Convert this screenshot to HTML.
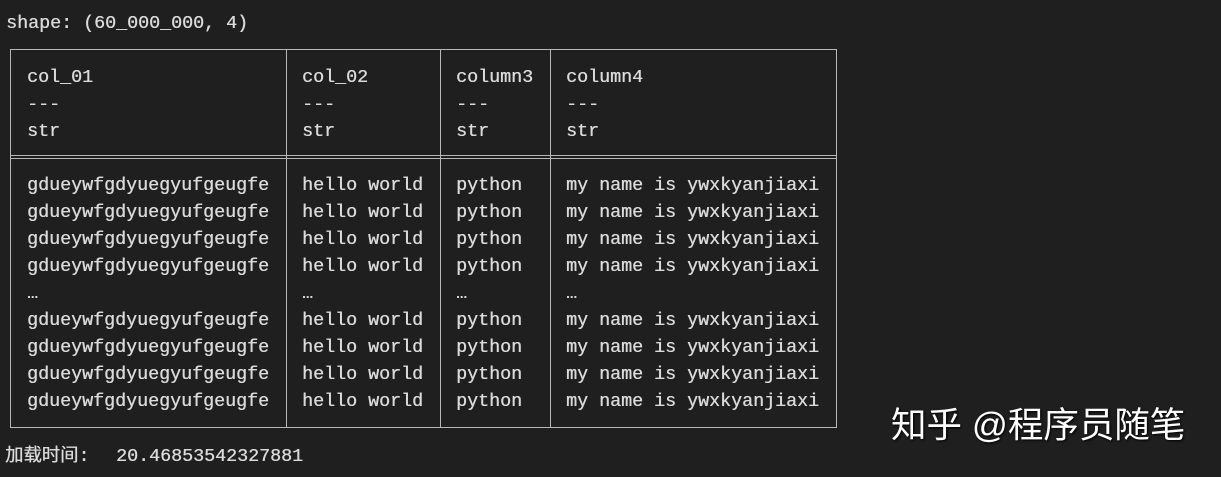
<!DOCTYPE html>
<html><head><meta charset="utf-8"><style>
html,body{margin:0;padding:0;}
body{width:1221px;height:477px;background:#1f1f1f;position:relative;overflow:hidden;font-family:"Liberation Mono","Noto Sans CJK SC",monospace;font-size:18.33px;color:#dadada;}
.t{position:absolute;white-space:pre;line-height:27px;text-shadow:0.4px 0 0 #dadada;}
.h{position:absolute;height:1px;background:#b8b8b8;}
.v{position:absolute;width:1px;background:#b8b8b8;}
.wm{position:absolute;left:891px;top:402px;font-family:"Liberation Sans","Noto Sans CJK SC",sans-serif;font-size:35.5px;color:#fff;white-space:pre;line-height:46px;text-shadow:1px 1px 2px #000;}
</style></head><body>
<div class="t" style="left:6px;top:10px">shape: (60_000_000, 4)</div>
<div class="h" style="left:10px;top:49px;width:827px"></div>
<div class="h" style="left:10px;top:155px;width:827px"></div>
<div class="h" style="left:10px;top:158px;width:827px"></div>
<div class="h" style="left:10px;top:427px;width:827px"></div>
<div class="v" style="left:10px;top:49px;height:379px"></div>
<div class="v" style="left:286px;top:49px;height:379px"></div>
<div class="v" style="left:440px;top:49px;height:379px"></div>
<div class="v" style="left:550px;top:49px;height:379px"></div>
<div class="v" style="left:836px;top:49px;height:379px"></div>
<div class="t" style="left:27px;top:64px">col_01
---
str</div>
<div class="t" style="left:302px;top:64px">col_02
---
str</div>
<div class="t" style="left:456px;top:64px">column3
---
str</div>
<div class="t" style="left:566px;top:64px">column4
---
str</div>
<div class="t" style="left:27px;top:172px">gdueywfgdyuegyufgeugfe
gdueywfgdyuegyufgeugfe
gdueywfgdyuegyufgeugfe
gdueywfgdyuegyufgeugfe
…
gdueywfgdyuegyufgeugfe
gdueywfgdyuegyufgeugfe
gdueywfgdyuegyufgeugfe
gdueywfgdyuegyufgeugfe</div>
<div class="t" style="left:302px;top:172px">hello world
hello world
hello world
hello world
…
hello world
hello world
hello world
hello world</div>
<div class="t" style="left:456px;top:172px">python
python
python
python
…
python
python
python
python</div>
<div class="t" style="left:566px;top:172px">my name is ywxkyanjiaxi
my name is ywxkyanjiaxi
my name is ywxkyanjiaxi
my name is ywxkyanjiaxi
…
my name is ywxkyanjiaxi
my name is ywxkyanjiaxi
my name is ywxkyanjiaxi
my name is ywxkyanjiaxi</div>
<div class="t" style="left:5px;top:443px">加载时间:</div>
<div class="t" style="left:116px;top:443px">20.46853542327881</div>
<div class="wm">知乎 @程序员随笔</div>
</body></html>
